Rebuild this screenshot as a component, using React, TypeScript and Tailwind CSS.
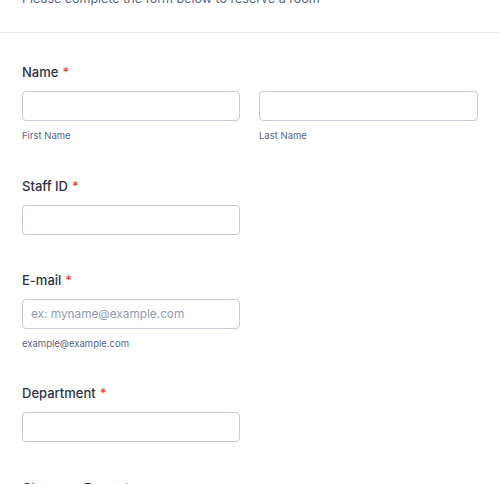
type FieldProps = {
  label: string;
  className?: string;
  children: React.ReactNode;
};

function Field({ label, className = "", children }: FieldProps) {
  return (
    <div className={className}>
      <label className="block text-[13px] leading-[20px] font-medium text-[#2c3345]">
        {label}
        <span className="ml-[4px] text-[#f23a3c]">*</span>
      </label>
      {children}
    </div>
  );
}

function TextInput({ placeholder }: { placeholder?: string }) {
  return (
    <input
      type="text"
      placeholder={placeholder}
      className="mt-[9px] block h-[30px] w-[218px] rounded-[4px] border border-[#c3cad8] bg-white px-[8px] text-[11.8px] text-[#2c3345] outline-none placeholder:text-[#8f99ad]"
    />
  );
}

function SubLabel({ children }: { children: React.ReactNode }) {
  return <p className="mt-[8px] text-[9.5px] leading-[14px] text-[#57647e]">{children}</p>;
}

export default function App() {
  return (
    <div className="h-[484px] w-[500px] overflow-hidden bg-white font-['Inter',sans-serif]">
      {/* Header */}
      <div className="-mt-[11px] border-b border-[#e6e8ef] px-[22px] pb-[23px]">
        <p className="text-[12.5px] leading-[20px] text-[#57647e]">
          Please complete the form below to reserve a room
        </p>
      </div>

      <div className="px-[22px]">
        <Field label="Name" className="mt-[29px]">
          <div className="flex gap-[19px]">
            <div>
              <TextInput />
              <SubLabel>First Name</SubLabel>
            </div>
            <div>
              <input
                type="text"
                className="mt-[9px] block h-[30px] w-[219px] rounded-[4px] border border-[#c3cad8] bg-white px-[8px] text-[12px] outline-none"
              />
              <SubLabel>Last Name</SubLabel>
            </div>
          </div>
        </Field>

        <Field label="Staff ID" className="mt-[33px]">
          <TextInput />
        </Field>

        <Field label="E-mail" className="mt-[35px]">
          <TextInput placeholder="ex: myname@example.com" />
          <SubLabel>example@example.com</SubLabel>
        </Field>

        <Field label="Department" className="mt-[32px]">
          <TextInput />
        </Field>

        <Field label="Choose a Room" className="mt-[35.5px]">
          <TextInput />
        </Field>
      </div>
    </div>
  );
}
